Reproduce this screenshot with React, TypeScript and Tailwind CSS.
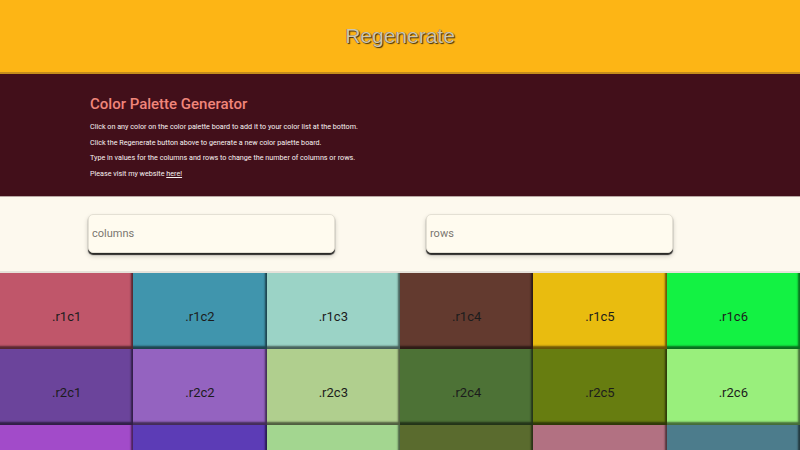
import React from 'react';

const rows: string[][] = [
  ['#c0566a', '#4095ad', '#9bd3c6', '#633a2f', '#e9bc0f', '#13f243'],
  ['#6b449b', '#9463c0', '#b0cf8e', '#4d7236', '#677d10', '#99ef7c'],
  ['#a24bc9', '#5c3cb6', '#a3d690', '#5a6b2e', '#b27182', '#4c7c8c'],
];

export default function App() {
  return (
    <div className="w-[800px] h-[450px] overflow-hidden bg-[#fdf9ee]" style={{ fontFamily: 'Roboto, "Liberation Sans", sans-serif' }}>
      {/* header button */}
      <div className="h-[74px] bg-[#fdb515] border-b-2 border-[#c58d1c] flex items-center justify-center">
        <button
          className="text-[21px] text-[#cfc6ae] font-['Liberation_Sans',Arial,sans-serif] [text-shadow:1px_1px_1px_#3a2a10,-0.5px_-0.5px_0_#6a5520]"
        >
          Regenerate
        </button>
      </div>

      {/* intro */}
      <div className="h-[123px] bg-[#420f1a] border-b border-[#b9a7a3] pl-[90px] pt-[20px]">
        <h1 className="text-[15px] font-medium text-[#f0857a] leading-[20px]">Color Palette Generator</h1>
        <div className="mt-[9px] text-[7.2px] text-[#f8f2f2] leading-[8px] flex flex-col gap-[7.7px]">
          <p>Click on any color on the color palette board to add it to your color list at the bottom.</p>
          <p>Click the Regenerate button above to generate a new color palette board.</p>
          <p>Type in values for the columns and rows to change the number of columns or rows.</p>
          <p>
            Please visit my website <a className="underline">here!</a>
          </p>
        </div>
      </div>

      {/* inputs */}
      <div className="h-[76px] bg-[#fdf9ee] border-b-2 border-[#e6e2da] flex items-start pt-[17px] pl-[88px] gap-[91px]">
        <input
          placeholder="columns"
          className="w-[247px] h-[39px] rounded-[5px] bg-[#fffbef] border border-[#e4e0d4] px-[3px] text-[11px] placeholder:text-[#7a7670] shadow-[0_2px_1px_rgba(0,0,0,0.8),0_3px_5px_rgba(0,0,0,0.2)] outline-none"
        />
        <input
          placeholder="rows"
          className="w-[247px] h-[39px] rounded-[5px] bg-[#fffbef] border border-[#e4e0d4] px-[3px] text-[11px] placeholder:text-[#7a7670] shadow-[0_2px_1px_rgba(0,0,0,0.8),0_3px_5px_rgba(0,0,0,0.2)] outline-none"
        />
      </div>

      {/* palette board */}
      <div className="grid grid-cols-6">
        {rows.map((row, r) =>
          row.map((color, c) => (
            <div
              key={`${r}-${c}`}
              className="h-[76px] flex items-center justify-center pt-[12px] text-[13px] text-[#1c1c1c] shadow-[inset_-2px_-3px_2px_rgba(0,0,0,0.55)]"
              style={{ backgroundColor: color }}
            >
              {`.r${r + 1}c${c + 1}`}
            </div>
          ))
        )}
      </div>
    </div>
  );
}
